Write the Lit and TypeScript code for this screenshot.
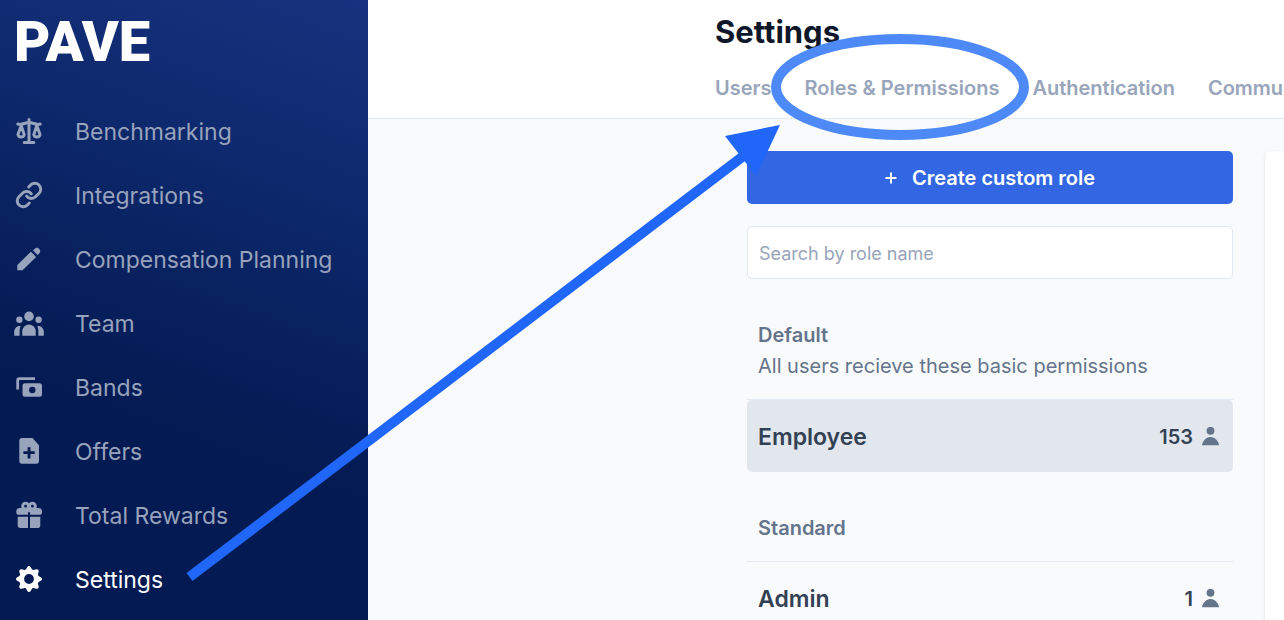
import { LitElement, html, svg, css } from "lit";
import { customElement } from "lit/decorators.js";
import { classMap } from "lit/directives/class-map.js";

const gearTeeth = [0, 45, 90, 135, 180, 225, 270, 315];

const icons = {
  scales: svg`
    <g fill="none" stroke="currentColor" stroke-width="3" stroke-linecap="round" stroke-linejoin="round">
      <path d="M15 3.5V26.400M10.200 26.400H19.800M3.800 8C7.500 9.600 11 6.500 15 6.500S22.500 9.600 26.200 8"/>
      <path d="M7.200 9.500L4 18.600a3.200 3.200 0 0 0 6.200 0ZM22.800 9.500L19.800 18.600a3.200 3.200 0 0 0 6.200 0Z"/>
    </g>`,
  link: svg`
    <g fill="none" stroke="currentColor" stroke-width="2.500" stroke-linecap="round" stroke-linejoin="round" transform="translate(.84 .84) scale(1.18)">
      <path d="M10 13a5 5 0 0 0 7.54.54l3-3a5 5 0 0 0-7.07-7.07l-1.720 1.710"/>
      <path d="M14 11a5 5 0 0 0-7.54-.54l-3 3a5 5 0 0 0 7.07 7.070l1.710-1.710"/>
    </g>`,
  pencil: svg`
    <path fill="currentColor" d="M3.300 26.300V21L16.900 7.700L22.100 12.900L8.600 26.300ZM19 6.500L20.900 4.700a3.200 3.200 0 0 1 4.500 4.500L23.600 11Z"/>`,
  team: svg`
    <g fill="currentColor">
      <circle cx="15" cy="8.400" r="4.800"/>
      <circle cx="5.400" cy="11.700" r="3.200"/>
      <circle cx="24.600" cy="11.700" r="3.200"/>
      <path d="M8.300 27.700V23.300a6.700 6.700 0 0 1 13.400 0V27.700Z"/>
      <path d="M.2 27.700V23.500A5.500 5.500 0 0 1 6.700 18.100Q5.600 20.300 5.600 23V27.700Z"/>
      <path d="M29.800 27.700V23.500A5.500 5.500 0 0 0 23.300 18.100Q24.400 20.300 24.400 23V27.700Z"/>
    </g>`,
  bands: svg`
    <path fill="none" stroke="currentColor" stroke-width="2.800" d="M3.700 17.500V8.200a1.600 1.600 0 0 1 1.600-1.600H21"/>
    <path fill="currentColor" fill-rule="evenodd" d="M11 11.300H25.500a2.500 2.500 0 0 1 2.500 2.500V22.200a2.500 2.500 0 0 1-2.500 2.500H11a2.500 2.500 0 0 1-2.500-2.500V13.800a2.500 2.500 0 0 1 2.500-2.500ZM18.300 14.800a3.200 3.200 0 1 0 0 6.400a3.200 3.200 0 0 0 0-6.400Z"/>`,
  offers: svg`
    <path fill="currentColor" fill-rule="evenodd" d="M8 2H18.500L25 9.300V25a2.700 2.700 0 0 1-2.700 2.700H8A2.700 2.700 0 0 1 5.300 25V4.700A2.700 2.700 0 0 1 8 2ZM13.600 11.200V15.200H9.400V18.100H13.600V22.400H16.500V18.100H20.700V15.200H16.500V11.200Z"/>`,
  gift: svg`
    <g fill="none" stroke="currentColor" stroke-width="3">
      <circle cx="11.600" cy="6.200" r="2.900"/>
      <circle cx="18.400" cy="6.200" r="2.900"/>
    </g>
    <path fill="currentColor" d="M5.500 8H24.500a3.500 3.500 0 0 1 3.500 3.500V12.200a2.600 2.600 0 0 1-2.600 2.600H16V12.300H14V14.800H4.900a2.600 2.600 0 0 1-2.600-2.600V11.500a3.500 3.500 0 0 1 3.200-3.500ZM3.700 16.700H14V28H6.500a2.800 2.800 0 0 1-2.800-2.800ZM16 16.700H26.300V25.200a2.800 2.800 0 0 1-2.800 2.800H16Z"/>`,
  gear: svg`
    <circle cx="15" cy="15" r="7.400" fill="none" stroke="currentColor" stroke-width="5"/>
    ${gearTeeth.map((a) => svg`<path fill="currentColor" transform="rotate(${a} 15 15)" d="M11.300 6.500L13.400 2.900a1.900 1.900 0 0 1 3.200 0L18.700 6.500Z"/>`)}`,
};

const navItems = [
  { label: "Benchmarking", icon: icons.scales },
  { label: "Integrations", icon: icons.link },
  { label: "Compensation Planning", icon: icons.pencil },
  { label: "Team", icon: icons.team },
  { label: "Bands", icon: icons.bands },
  { label: "Offers", icon: icons.offers },
  { label: "Total Rewards", icon: icons.gift },
  { label: "Settings", icon: icons.gear, current: true },
];

const tabs = ["Users", "Roles & Permissions", "Authentication", "Communications"];

const groups = [
  {
    title: "Default",
    description: "All users recieve these basic permissions",
    roles: [{ name: "Employee", count: 153, selected: true }],
  },
  {
    title: "Standard",
    description: "",
    roles: [{ name: "Admin", count: 1, selected: false }],
  },
];

@customElement("app-root")
export class AppRoot extends LitElement {
  static styles = css`
    :host {
      display: block;
      position: relative;
      height: 100vh;
      overflow: hidden;
      font-family: Inter, "Liberation Sans", sans-serif;
      color: #334155;
      background: #f9fafc;
    }
    * { box-sizing: border-box; }
    a { color: inherit; text-decoration: none; }
    h1, h2, p, ul { margin: 0; padding: 0; }
    ul { list-style: none; }
    .layout { display: flex; height: 100%; }
    .sidebar {
      flex: 0 0 368px;
      padding: 12px 14px 0;
      background: linear-gradient(200deg, #17337f 0%, #0c2769 32%, #031a52 66%, #031a52 100%);
      color: #fff;
    }
    .logo {
      display: block;
      font: 900 56px/60px Roboto, sans-serif;
    }
    .nav { padding-top: 27px; }
    .nav-link {
      display: flex;
      align-items: center;
      gap: 31px;
      height: 64px;
      font-size: 23px;
      line-height: 32px;
      white-space: nowrap;
      color: #98a3bc;
    }
    .nav-link.current { color: #fff; }
    .nav-icon { width: 30px; height: 30px; flex: none; }
    .nav-label { padding-top: 2px; }
    .main { flex: 1; min-width: 0; overflow: hidden; }
    .header {
      height: 119px;
      padding: 12px 0 0 347px;
      background: #fff;
      border-bottom: 1px solid #e2e8f0;
    }
    .title { font-size: 31px; line-height: 40px; font-weight: 700; color: #0f172a; }
    .tabs {
      display: flex;
      gap: 33px;
      padding-top: 20px;
      font-size: 20px;
      line-height: 32px;
      font-weight: 600;
      white-space: nowrap;
      color: #98a5ba;
    }
    .content {
      display: grid;
      grid-template-columns: 486px minmax(480px, 1fr);
      gap: 32px;
      padding: 32px 0 0 379px;
    }
    .create {
      display: flex;
      align-items: center;
      justify-content: center;
      gap: 15px;
      width: 100%;
      height: 53px;
      padding: 0;
      border: 0;
      border-radius: 5px;
      background: #3366e3;
      color: #fff;
      font: 600 20px/32px Inter, sans-serif;
    }
    .plus { width: 12px; height: 12px; }
    .search {
      display: block;
      width: 100%;
      height: 53px;
      margin-top: 22px;
      padding: 2px 11px 0;
      border: 1px solid #e2e8f0;
      border-radius: 5px;
      background: #fff;
      font: 400 18px/28px Inter, sans-serif;
      color: #334155;
    }
    .search::placeholder { color: #98a5ba; opacity: 1; }
    .group { padding-top: 41px; }
    .group-head {
      padding: 0 11px 17px;
      border-bottom: 1px solid #e2e8f0;
      font-size: 20px;
      line-height: 31px;
      color: #64748b;
    }
    .group-title { font-size: 20px; line-height: 31px; font-weight: 600; }
    .role {
      display: flex;
      align-items: center;
      height: 72px;
      padding: 2px 13px 0 11px;
      border-radius: 5px;
      font-size: 23px;
      line-height: 32px;
      font-weight: 600;
    }
    .role.selected { background: #e2e7ee; }
    .role-name { flex: 1; }
    .count { font-size: 20px; }
    .person { width: 20px; height: 20px; margin-left: 7px; color: #64748b; }
    .panel {
      height: 600px;
      border-radius: 6px;
      background: #fff;
      box-shadow: 0 1px 3px rgba(15, 23, 42, 0.16);
    }
    .annotation { position: absolute; top: 0; left: 0; pointer-events: none; }
  `;

  render() {
    return html`
      <div class="layout">
        <aside class="sidebar">
          <a class="logo" href="#">PAVE</a>
          <nav class="nav">
            <ul>
              ${navItems.map(
                (item) => html`<li>
                  <a class=${classMap({ "nav-link": true, current: !!item.current })} href="#">
                    <svg class="nav-icon" viewBox="0 0 30 30" aria-hidden="true">${item.icon}</svg>
                    <span class="nav-label">${item.label}</span>
                  </a>
                </li>`
              )}
            </ul>
          </nav>
        </aside>
        <main class="main">
          <header class="header">
            <h1 class="title">Settings</h1>
            <nav class="tabs">${tabs.map((tab) => html`<a href="#">${tab}</a>`)}</nav>
          </header>
          <div class="content">
            <section>
              <button class="create" type="button">
                <svg class="plus" viewBox="0 0 12 12" aria-hidden="true">
                  <path d="M6 .5V11.500M.5 6H11.500" stroke="currentColor" stroke-width="2" />
                </svg>
                <span>Create custom role</span>
              </button>
              <input class="search" type="text" aria-label="Search by role name" placeholder="Search by role name" />
              ${groups.map(
                (group) => html`<div class="group">
                  <div class="group-head">
                    <h2 class="group-title">${group.title}</h2>
                    ${group.description ? html`<p>${group.description}</p>` : null}
                  </div>
                  ${group.roles.map(
                    (role) => html`<a class=${classMap({ role: true, selected: role.selected })} href="#">
                      <span class="role-name">${role.name}</span>
                      <span class="count">${role.count}</span>
                      <svg class="person" viewBox="0 0 20 20" aria-hidden="true">
                        <circle cx="10.500" cy="3.800" r="3.900" fill="currentColor" />
                        <path d="M2 18.300Q2 16 4 13.500Q6.500 10 10.500 10T17 13.500Q19 16 19 18.300Z" fill="currentColor" />
                      </svg>
                    </a>`
                  )}
                </div>`
              )}
            </section>
            <section class="panel"></section>
          </div>
        </main>
      </div>
      <svg class="annotation" width="1284" height="620" viewBox="0 0 1284 620" aria-hidden="true">
        <path d="M189.500 577L750 151" stroke="#2066f8" stroke-width="10" />
        <path d="M780 125L725 136L756 176Z" fill="#2066f8" />
        <ellipse cx="900" cy="87" rx="124" ry="48" fill="none" stroke="#4d8af8" stroke-width="10" />
      </svg>
    `;
  }
}
